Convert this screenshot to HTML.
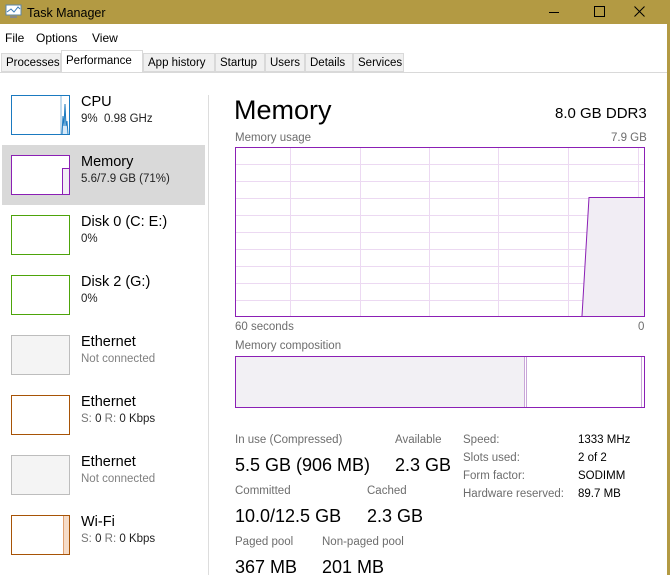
<!DOCTYPE html>
<html><head><meta charset="utf-8"><style>
*{margin:0;padding:0;box-sizing:border-box}
body{width:670px;height:575px;overflow:hidden;background:#fff;font-family:"Liberation Sans",sans-serif;position:relative;color:#000}
.abs{position:absolute;white-space:nowrap}
#title{left:0;top:0;width:670px;height:24px;background:#b39a43}
#menu span{position:absolute;top:31px;font-size:12px}
.tab{position:absolute;top:53px;height:19px;background:#f0f0f0;border:1px solid #d9d9d9;font-size:11.5px;padding:3px 0 0 4px;white-space:nowrap;overflow:hidden}
.side .th{position:absolute;left:11px;width:59px;height:40px;border:1px solid}
.side .n{position:absolute;left:81px;font-size:14.5px}
.side .s{position:absolute;left:81px;font-size:11.5px;color:#222}
.lbl{position:absolute;font-size:11.5px;color:#6d6d6d;white-space:nowrap}
.big{position:absolute;font-size:18px;white-space:nowrap}
.r{position:absolute;font-size:11.5px;white-space:nowrap}
</style></head><body>
<div id="title" class="abs"></div>
<svg class="abs" style="left:5px;top:4px" width="18" height="16"><rect x="1" y="1" width="15" height="10" fill="#fff" stroke="#5b86a8"/><polyline points="2,8 6,5 9,8 13,3 15,5" fill="none" stroke="#3a7ab8"/><rect x="5" y="12" width="7" height="2" fill="#888"/></svg>
<div class="abs" style="left:27px;top:6px;font-size:12.5px">Task Manager</div>
<div class="abs" style="left:549px;top:12px;width:10px;height:1px;background:#000"></div>
<div class="abs" style="left:594px;top:6px;width:11px;height:11px;border:1px solid #000"></div>
<svg class="abs" style="left:634px;top:6px" width="11" height="11"><path d="M0.5 0.5L10.5 10.5M10.5 0.5L0.5 10.5" stroke="#000"/></svg>
<div id="menu"><span style="left:5px">File</span><span style="left:36px">Options</span><span style="left:92px">View</span></div>
<div class="tab" style="left:1px;width:60px">Processes</div>
<div class="tab" style="left:61px;top:50px;height:23px;width:82px;background:#fff;border-bottom:none;padding-top:4px">Performance</div>
<div class="tab" style="left:143px;width:72px">App history</div>
<div class="tab" style="left:215px;width:50px">Startup</div>
<div class="tab" style="left:265px;width:40px">Users</div>
<div class="tab" style="left:305px;width:48px">Details</div>
<div class="tab" style="left:353px;width:51px">Services</div>
<div class="abs" style="left:0;top:72px;width:667px;height:1px;background:#d9d9d9"></div>
<div class="abs" style="left:667px;top:24px;width:3px;height:551px;background:#b39a43"></div>
<div class="abs" style="left:208px;top:95px;width:1px;height:480px;background:#ddd"></div>
<div class="side">
<div class="abs" style="left:2px;top:145px;width:203px;height:60px;background:#d9d9d9"></div>
<div class="th" style="top:95px;border-color:#1b7ac0;background:#fff"><svg width="57" height="38" style="position:absolute;left:0;top:0"><line x1="49" y1="0" x2="49" y2="38" stroke="#8ab8de"/><polyline points="50,38 51,20 52,30 53,8 54,30 55,25 56,38" fill="#d6e9f8" stroke="#1b7ac0"/></svg></div>
<div class="n" style="top:94px">CPU</div><div class="s" style="top:113px">9%&nbsp; 0.98 GHz</div>
<div class="th" style="top:155px;border-color:#8b1fb5;background:#fff"><div style="position:absolute;left:50px;top:12px;width:7px;height:26px;background:#f2eef5;border-left:1px solid #8b1fb5;border-top:1px solid #8b1fb5"></div></div>
<div class="n" style="top:154px">Memory</div><div class="s" style="top:173px">5.6/7.9 GB (71%)</div>
<div class="th" style="top:215px;border-color:#4da40a"></div>
<div class="n" style="top:214px">Disk 0 (C: E:)</div><div class="s" style="top:233px">0%</div>
<div class="th" style="top:275px;border-color:#4da40a"></div>
<div class="n" style="top:274px">Disk 2 (G:)</div><div class="s" style="top:293px">0%</div>
<div class="th" style="top:335px;border-color:#bdbdbd;background:#f4f4f4"></div>
<div class="n" style="top:334px">Ethernet</div><div class="s" style="top:353px;color:#808080">Not connected</div>
<div class="th" style="top:395px;border-color:#a75306"></div>
<div class="n" style="top:394px">Ethernet</div><div class="s" style="top:413px"><span style="color:#777">S:</span> 0 <span style="color:#777">R:</span> 0 Kbps</div>
<div class="th" style="top:455px;border-color:#bdbdbd;background:#f4f4f4"></div>
<div class="n" style="top:454px">Ethernet</div><div class="s" style="top:473px;color:#808080">Not connected</div>
<div class="th" style="top:515px;border-color:#a75306"><div style="position:absolute;left:51px;top:0;width:6px;height:38px;background:#f6dcc8;border-left:1px solid #e0a070"></div></div>
<div class="n" style="top:514px">Wi-Fi</div><div class="s" style="top:533px"><span style="color:#777">S:</span> 0 <span style="color:#777">R:</span> 0 Kbps</div>
</div>
<div class="abs" style="left:234px;top:95px;font-size:27px">Memory</div>
<div class="abs" style="left:555px;top:105px;font-size:15px">8.0 GB DDR3</div>
<div class="lbl" style="left:235px;top:132px">Memory usage</div>
<div class="lbl" style="left:611px;top:132px">7.9 GB</div>
<svg class="abs" style="left:235px;top:147px" width="410" height="170">
<g stroke="#ecd9f2" stroke-width="1">
<line x1="55.5" y1="0" x2="55.5" y2="170"/><line x1="125.5" y1="0" x2="125.5" y2="170"/><line x1="194.5" y1="0" x2="194.5" y2="170"/><line x1="263.5" y1="0" x2="263.5" y2="170"/><line x1="333.5" y1="0" x2="333.5" y2="170"/><line x1="403.5" y1="0" x2="403.5" y2="170"/>
<line x1="0" y1="17.5" x2="410" y2="17.5"/><line x1="0" y1="34.5" x2="410" y2="34.5"/><line x1="0" y1="51.5" x2="410" y2="51.5"/><line x1="0" y1="68.5" x2="410" y2="68.5"/><line x1="0" y1="85.5" x2="410" y2="85.5"/><line x1="0" y1="102.5" x2="410" y2="102.5"/><line x1="0" y1="119.5" x2="410" y2="119.5"/><line x1="0" y1="136.5" x2="410" y2="136.5"/><line x1="0" y1="153.5" x2="410" y2="153.5"/>
</g>
<polygon points="347,169 354,50 409,50 409,169" fill="#f1edf4"/>
<polyline points="347,169 354,50.5 409,50.5" fill="none" stroke="#8b1fb5"/>
<rect x="0.5" y="0.5" width="409" height="169" fill="none" stroke="#8b1fb5"/>
</svg>
<div class="lbl" style="left:235px;top:321px">60 seconds</div>
<div class="lbl" style="left:638px;top:321px">0</div>
<div class="lbl" style="left:235px;top:340px">Memory composition</div>
<svg class="abs" style="left:235px;top:356px" width="410" height="52">
<rect x="1" y="1" width="288" height="50" fill="#f2f0f4"/>
<line x1="289.5" y1="0" x2="289.5" y2="52" stroke="#c9a6d8"/><line x1="291.5" y1="0" x2="291.5" y2="52" stroke="#c9a6d8"/>
<line x1="406.5" y1="0" x2="406.5" y2="52" stroke="#c9a6d8"/>
<rect x="0.5" y="0.5" width="409" height="51" fill="none" stroke="#8b1fb5"/>
</svg>
<div class="lbl" style="left:235px;top:434px">In use (Compressed)</div>
<div class="lbl" style="left:395px;top:434px">Available</div>
<div class="big" style="left:235px;top:455px">5.5 GB (906 MB)</div>
<div class="big" style="left:395px;top:455px">2.3 GB</div>
<div class="lbl" style="left:235px;top:485px">Committed</div>
<div class="lbl" style="left:367px;top:485px">Cached</div>
<div class="big" style="left:235px;top:506px">10.0/12.5 GB</div>
<div class="big" style="left:367px;top:506px">2.3 GB</div>
<div class="lbl" style="left:235px;top:536px">Paged pool</div>
<div class="lbl" style="left:322px;top:536px">Non-paged pool</div>
<div class="big" style="left:235px;top:557px">367 MB</div>
<div class="big" style="left:322px;top:557px">201 MB</div>
<div class="lbl" style="left:463px;top:434px">Speed:</div><div class="r" style="left:578px;top:434px">1333 MHz</div>
<div class="lbl" style="left:463px;top:452px">Slots used:</div><div class="r" style="left:578px;top:452px">2 of 2</div>
<div class="lbl" style="left:463px;top:470px">Form factor:</div><div class="r" style="left:578px;top:470px">SODIMM</div>
<div class="lbl" style="left:463px;top:488px">Hardware reserved:</div><div class="r" style="left:578px;top:488px">89.7 MB</div>
</body></html>
